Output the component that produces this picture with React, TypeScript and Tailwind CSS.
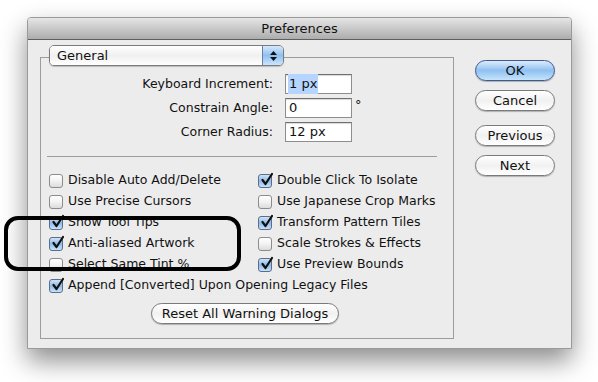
import React from "react";

const font = { fontFamily: '"DejaVu Sans", "Lucida Grande", sans-serif' };

const leftChecks: { label: string; checked: boolean }[] = [
  { label: "Disable Auto Add/Delete", checked: false },
  { label: "Use Precise Cursors", checked: false },
  { label: "Show Tool Tips", checked: true },
  { label: "Anti-aliased Artwork", checked: true },
  { label: "Select Same Tint %", checked: false },
];

const rightChecks: { label: string; checked: boolean }[] = [
  { label: "Double Click To Isolate", checked: true },
  { label: "Use Japanese Crop Marks", checked: false },
  { label: "Transform Pattern Tiles", checked: true },
  { label: "Scale Strokes & Effects", checked: false },
  { label: "Use Preview Bounds", checked: true },
];

const CheckBox: React.FC<{ checked: boolean }> = ({ checked }) => (
  <span
    className={`relative flex h-[14px] w-[14px] shrink-0 items-center justify-center rounded-[3px] border ${
      checked
        ? "border-[#5a6e8c] bg-gradient-to-b from-[#cfe3f8] via-[#8fbbe8] to-[#c8e2fb]"
        : "border-[#8c8c8c] bg-gradient-to-b from-[#ffffff] via-[#f2f2f2] to-[#dcdcdc]"
    }`}
  >
    {checked && (
      <svg
        viewBox="0 0 14 14"
        className="absolute -top-[3px] left-[1px] h-[15px] w-[14px]"
      >
        <path
          d="M2.5 7.5 L5.5 11.5 L12 1.5"
          fill="none"
          stroke="#111"
          strokeWidth="2.2"
          strokeLinecap="round"
          strokeLinejoin="round"
        />
      </svg>
    )}
  </span>
);

const CheckRow: React.FC<{ label: string; checked: boolean }> = ({
  label,
  checked,
}) => (
  <div className="flex h-[21px] items-center gap-[5px] text-[12.5px] text-[#111]">
    <CheckBox checked={checked} />
    <span className="whitespace-nowrap">{label}</span>
  </div>
);

const AquaButton: React.FC<{ label: string; primary?: boolean; className?: string }> = ({
  label,
  primary,
  className = "",
}) => (
  <button
    className={`flex h-[21px] items-center justify-center rounded-full border text-[13px] text-[#111] shadow-[0_1px_1px_rgba(0,0,0,0.25)] ${
      primary
        ? "border-[#3c5a8f] bg-gradient-to-b from-[#dcebfb] via-[#8fc0f1] to-[#c6e4fc]"
        : "border-[#7a7a7a] bg-gradient-to-b from-[#ffffff] via-[#f1f1f1] to-[#ffffff]"
    } ${className}`}
  >
    {label}
  </button>
);

const FieldRow: React.FC<{ label: string; value: string; selected?: boolean; degree?: boolean }> = ({
  label,
  value,
  selected,
  degree,
}) => (
  <div className="flex h-[20px] items-center">
    <span className="w-[232px] whitespace-nowrap text-right text-[12.5px] text-[#111]">
      {label}
    </span>
    <div className="ml-[12px] flex h-[20px] w-[67px] items-center border border-[#8e8e8e] border-t-[#6f6f6f] bg-white pl-[2px] text-[13px] text-[#111] shadow-[inset_0_1px_1px_rgba(0,0,0,0.15)]">
      <span className={selected ? "bg-[#b5d5ff] px-[1px]" : "px-[1px]"}>{value}</span>
    </div>
    {degree && <span className="-mt-[6px] ml-[3px] text-[13px] text-[#111]">°</span>}
  </div>
);

export default function App() {
  return (
    <div
      className="relative h-[382px] w-[598px] overflow-hidden bg-white pl-[27px] pt-[17px]"
      style={font}
    >
      <div className="h-[332px] w-[545px] overflow-hidden rounded-t-[4px] border border-[#9a9a9a] bg-[#ececec] shadow-[0_12px_26px_rgba(0,0,0,0.45)]">
        {/* Title bar */}
        <div className="flex h-[22px] items-center justify-center border-b border-[#5e5e5e] bg-gradient-to-b from-[#e6e6e6] to-[#adadad] text-[13px] text-[#111]">
          Preferences
        </div>

        <div className="flex pl-[12px] pt-[5px]">
          {/* Left: popup + group box */}
          <div className="flex w-[414px] flex-col">
            <div className="relative z-10 ml-[9px] flex h-[21px] w-[235px] items-stretch overflow-hidden rounded-[5px] border border-[#7b7b7b] shadow-[0_1px_1px_rgba(0,0,0,0.2)]">
              <div className="flex flex-1 items-center bg-gradient-to-b from-[#ffffff] via-[#f0f0f0] to-[#ffffff] pl-[7px] text-[13px] text-[#111]">
                General
              </div>
              <div className="flex w-[21px] flex-col items-center justify-center gap-[2px] border-l border-[#6d7fa0] bg-gradient-to-b from-[#d6e8fb] via-[#8fc0f1] to-[#cbe6fd]">
                <svg viewBox="0 0 7 4" className="h-[4px] w-[7px]">
                  <path d="M3.5 0 L7 4 L0 4 Z" fill="#111" />
                </svg>
                <svg viewBox="0 0 7 4" className="h-[4px] w-[7px]">
                  <path d="M0 0 L7 0 L3.5 4 Z" fill="#111" />
                </svg>
              </div>
            </div>

            <div className="-mt-[9px] flex h-[282px] flex-col border border-[#9c9c9c]">
              <div className="mt-[16px] flex flex-col gap-[4px]">
                <FieldRow label="Keyboard Increment:" value="1 px" selected />
                <FieldRow label="Constrain Angle:" value="0" degree />
                <FieldRow label="Corner Radius:" value="12 px" />
              </div>

              <div className="ml-[6px] mt-[14px] h-px w-[390px] bg-[#9c9c9c]" />

              <div className="ml-[8px] mt-[13px] flex">
                <div className="flex w-[209px] flex-col">
                  {leftChecks.map((c) => (
                    <CheckRow key={c.label} label={c.label} checked={c.checked} />
                  ))}
                </div>
                <div className="flex flex-col">
                  {rightChecks.map((c) => (
                    <CheckRow key={c.label} label={c.label} checked={c.checked} />
                  ))}
                </div>
              </div>
              <div className="ml-[8px]">
                <CheckRow label="Append [Converted] Upon Opening Legacy Files" checked />
              </div>

              <div className="mt-[7px] flex justify-center pr-[4px]">
                <AquaButton label="Reset All Warning Dialogs" className="w-[188px]" />
              </div>
            </div>
          </div>

          {/* Right buttons */}
          <div className="ml-[21px] flex flex-col pt-[15px]">
            <AquaButton label="OK" primary className="w-[80px]" />
            <AquaButton label="Cancel" className="mt-[9px] w-[80px]" />
            <AquaButton label="Previous" className="mt-[14px] w-[80px]" />
            <AquaButton label="Next" className="mt-[9px] w-[80px]" />
          </div>
        </div>
      </div>

      {/* Annotation highlight */}
      <div className="absolute left-[4px] top-[216px] h-[55px] w-[237px] rounded-[14px] border-[4px] border-black" />
    </div>
  );
}
